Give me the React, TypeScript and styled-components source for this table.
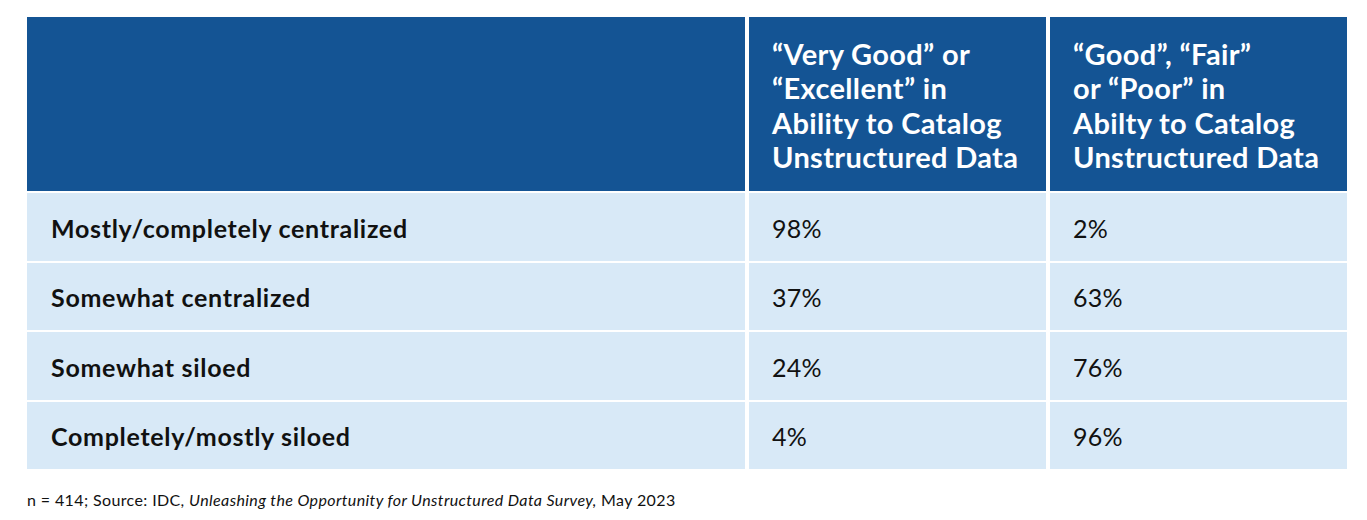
import React from "react";
import styled, { createGlobalStyle } from "styled-components";

const Global = createGlobalStyle`
  html, body { margin: 0; padding: 0; background: #ffffff; }
  body { font-family: "Lato", "Liberation Sans", sans-serif; }
`;

const Page = styled.div`
  padding: 17px 20px 0 27px;
  width: 1320px;
`;

const Table = styled.div`
  display: grid;
  grid-template-columns: 718px 1fr 1fr;
  column-gap: 4px;
  row-gap: 2px;
  background: #ffffff;
`;

const HeadCell = styled.div`
  background: #145494;
  height: 174px;
  box-sizing: border-box;
  padding: 3px 10px 0 23px;
  display: flex;
  align-items: center;
  color: #ffffff;
  font-weight: 700;
  font-size: 29px;
  line-height: 34.5px;
  letter-spacing: 0.35px;
  white-space: nowrap;
`;

const Cell = styled.div<{ $label?: boolean }>`
  background: #d8e9f7;
  height: 67.5px;
  box-sizing: border-box;
  padding: 2px 23px 0 ${(p) => (p.$label ? "24px" : "23px")};
  display: flex;
  align-items: center;
  color: #111111;
  font-size: 25px;
  letter-spacing: ${(p) => (p.$label ? "0.7px" : "0.3px")};
  font-weight: ${(p) => (p.$label ? 700 : 400)};
`;

const Note = styled.p`
  margin: 21px 0 0 0;
  font-size: 16px;
  letter-spacing: 0.38px;
  color: #111111;
  em { font-style: italic; }
`;

const rows: [string, string, string][] = [
  ["Mostly/completely centralized", "98%", "2%"],
  ["Somewhat centralized", "37%", "63%"],
  ["Somewhat siloed", "24%", "76%"],
  ["Completely/mostly siloed", "4%", "96%"],
];

export default function App() {
  return (
    <>
      <Global />
      <Page>
        <Table>
          <HeadCell />
          <HeadCell>
            <div>
              “Very Good” or
              <br />
              “Excellent” in
              <br />
              Ability to Catalog
              <br />
              Unstructured Data
            </div>
          </HeadCell>
          <HeadCell>
            <div>
              “Good”, “Fair”
              <br />
              or “Poor” in
              <br />
              Abilty to Catalog
              <br />
              Unstructured Data
            </div>
          </HeadCell>
          {rows.map(([label, a, b]) => (
            <React.Fragment key={label}>
              <Cell $label>{label}</Cell>
              <Cell>{a}</Cell>
              <Cell>{b}</Cell>
            </React.Fragment>
          ))}
        </Table>
        <Note>
          n = 414; Source: IDC, <em>Unleashing the Opportunity for Unstructured Data Survey,</em> May 2023
        </Note>
      </Page>
    </>
  );
}
